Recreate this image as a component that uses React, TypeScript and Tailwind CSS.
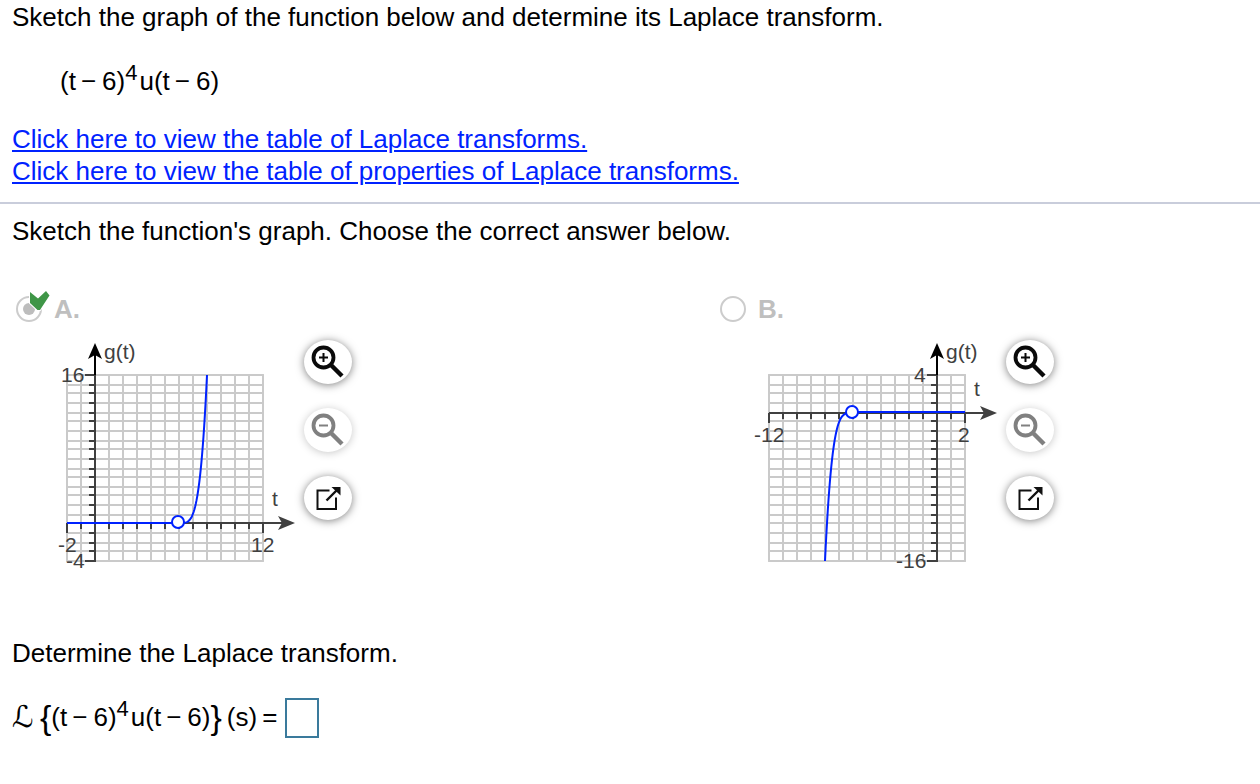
import { useState, type ReactNode } from "react";

const STEP_X = 14;
const ROWS = [0, 10, 18, 28, 38, 46, 56, 66, 74, 84, 94, 102, 112, 120, 130, 140, 148, 158, 168, 176, 186];
const COLS = Array.from({ length: 15 }, (_, i) => i * STEP_X);
const INK = "#404040";
const BLUE = "#0022ff";

type Label = { x: number; y: number; text: string };

type GraphProps = {
  title: string;
  width: number;
  left: number;
  axisCol: number;
  axisRow: number;
  line: [number, number];
  lineShift: number;
  open: number;
  direction: 1 | -1;
  labels: Label[];
};

function Graph({ title, width, left, axisCol, axisRow, line, lineShift, open, direction, labels }: GraphProps) {
  const top = 35;
  const right = left + 14 * STEP_X;
  const bottom = top + 186;
  const ax = left + axisCol * STEP_X;
  const ay = top + ROWS[axisRow];
  const ox = left + open * STEP_X;
  const curve = Array.from({ length: 41 }, (_, i) => {
    const u = i / 20;
    return `${ox + direction * STEP_X * u},${ay - direction * 9.25 * u ** 4}`;
  }).join(" ");

  return (
    <svg role="img" aria-label={title} width={width} height={240} className="shrink-0">
      <g stroke="#cacaca" strokeWidth={2} strokeLinecap="round">
        {ROWS.map((r) => (
          <line key={r} x1={left} x2={right} y1={top + r} y2={top + r} />
        ))}
        {COLS.map((c) => (
          <line key={c} x1={left + c} x2={left + c} y1={top} y2={bottom} />
        ))}
      </g>
      <g stroke={INK} strokeWidth={2}>
        <line x1={ax} x2={ax} y1={top} y2={bottom + 1} />
        <line x1={left} x2={right + 20} y1={ay} y2={ay} />
        {ROWS.map((r, i) => (
          <line key={r} x1={ax - (i === 0 || i === 20 ? 10 : 6)} x2={ax} y1={top + r} y2={top + r} />
        ))}
        {COLS.map((c, i) => (
          <line key={c} x1={left + c} x2={left + c} y1={ay} y2={ay + (i === 0 || i === 14 ? 10 : 6)} />
        ))}
      </g>
      <line x1={ax} x2={ax} y1={top} y2={12} stroke="#000" strokeWidth={2} />
      <path d={`M${ax} 3 L${ax + 7} 19 L${ax} 15 L${ax - 7} 19 Z`} fill="#000" />
      <path d={`M${right + 32} ${ay} l-17 7 l4 -7 l-4 -7 Z`} fill={INK} />
      <line
        x1={left + line[0] * STEP_X}
        x2={left + line[1] * STEP_X}
        y1={ay + lineShift}
        y2={ay + lineShift}
        stroke={BLUE}
        strokeWidth={2}
      />
      <polyline points={curve} fill="none" stroke={BLUE} strokeWidth={2} />
      <circle cx={ox - 1} cy={ay - 1} r={6} fill="#fff" stroke={BLUE} strokeWidth={2} />
      <g fill={INK} fontSize={21} fontFamily="'Liberation Sans', Arial, sans-serif">
        {labels.map((l) => (
          <text key={l.text} x={l.x} y={l.y}>
            {l.text}
          </text>
        ))}
      </g>
    </svg>
  );
}

function Magnifier({ minus = false }: { minus?: boolean }) {
  const color = minus ? "#808080" : "#0a0a0a";
  return (
    <svg width="48" height="44" fill="none" stroke={color}>
      <circle cx="19.5" cy="17.5" r="10" strokeWidth="3.8" />
      <path d="M27.5 25.5 L38 36" strokeWidth="4.4" />
      <path d={minus ? "M15 17.500h9" : "M15 17.500h9M19.500 13v9"} strokeWidth="2" />
    </svg>
  );
}

function PopOut() {
  return (
    <svg width="48" height="44" fill="none" stroke="#111" strokeWidth="2">
      <path d="M25.5 14.5H13.5V33H32V21.5" />
      <path d="M22.5 24.5L33 14" strokeWidth="2.4" />
      <path d="M27.5 11H36.5V19.5Z" fill="#111" stroke="none" />
    </svg>
  );
}

function RoundButton({ label, disabled, children }: { label: string; disabled?: boolean; children: ReactNode }) {
  return (
    <button
      type="button"
      aria-label={label}
      disabled={disabled}
      className="h-11 w-12 rounded-[50%] bg-white shadow-[0_1px_9px_rgba(0,0,0,0.5)] disabled:shadow-[0_1px_9px_rgba(0,0,0,0.22)]"
    >
      {children}
    </button>
  );
}

function Choice({
  letter,
  checked,
  onSelect,
  graph,
}: {
  letter: string;
  checked: boolean;
  onSelect: () => void;
  graph: GraphProps;
}) {
  return (
    <div>
      <div className="flex h-8 items-center gap-3 pl-1">
        <span className="relative flex">
          <input
            id={`choice-${letter}`}
            type="radio"
            name="graph"
            checked={checked}
            onChange={onSelect}
            className="size-[26px] appearance-none rounded-full border-2 border-[#cccccc] bg-white checked:bg-[#bdbdbd] checked:bg-clip-content checked:p-[5px]"
          />
          {checked && (
            <svg width="24" height="24" className="absolute -top-1.5 left-3" aria-hidden="true">
              <path
                d="M2 2L10 8.500L18 1L21.500 5.500L12 20H9.500L2 13Z"
                fill="#3f9647"
                stroke="#fff"
                strokeWidth="2"
                paintOrder="stroke"
              />
            </svg>
          )}
        </span>
        <label htmlFor={`choice-${letter}`} className="font-bold text-[#bfbfbf]">
          {letter}.
        </label>
      </div>
      <div className="mt-[15px] flex">
        <Graph {...graph} />
        <div className="flex flex-col gap-6">
          <RoundButton label="Zoom in">
            <Magnifier />
          </RoundButton>
          <RoundButton label="Zoom out" disabled>
            <Magnifier minus />
          </RoundButton>
          <RoundButton label="Open in a new window">
            <PopOut />
          </RoundButton>
        </div>
      </div>
    </div>
  );
}

function Minus() {
  return <span className="mr-1.5 ml-[5px]">−</span>;
}

function Expression() {
  return (
    <span className="whitespace-nowrap">
      (t
      <Minus />
      6)
      <sup className="relative -top-[10px] align-baseline text-[22px] leading-none">4</sup>
      <span className="ml-0.5">u(t</span>
      <Minus />
      6)
    </span>
  );
}

const graphA: GraphProps = {
  title: "Graph A of g(t)",
  width: 292,
  left: 55,
  axisCol: 2,
  axisRow: 16,
  line: [0, 8],
  lineShift: 0,
  open: 8,
  direction: 1,
  labels: [
    { x: 92, y: 19, text: "g(t)" },
    { x: 49, y: 42, text: "16" },
    { x: 260, y: 166, text: "t" },
    { x: 46, y: 212, text: "-2" },
    { x: 54, y: 228, text: "-4" },
    { x: 239, y: 212, text: "12" },
  ],
};

const graphB: GraphProps = {
  title: "Graph B of g(t)",
  width: 290,
  left: 53,
  axisCol: 12,
  axisRow: 4,
  line: [6, 14],
  lineShift: -1,
  open: 6,
  direction: -1,
  labels: [
    { x: 230, y: 19, text: "g(t)" },
    { x: 198, y: 42, text: "4" },
    { x: 258, y: 56, text: "t" },
    { x: 38, y: 102, text: "-12" },
    { x: 242, y: 102, text: "2" },
    { x: 180, y: 228, text: "-16" },
  ],
};

export default function App() {
  const [choice, setChoice] = useState("A");
  const [answer, setAnswer] = useState("");

  return (
    <main className="min-h-screen bg-white pt-px font-['Liberation_Sans',Arial,sans-serif] text-[26px] leading-8 text-black">
      <section className="border-b-2 border-[#c9cddb] px-3 pb-[15px]">
        <p>Sketch the graph of the function below and determine its Laplace transform.</p>
        <p className="mt-8 pl-12">
          <Expression />
        </p>
        <ul className="mt-[26px] text-[#0022ff] underline">
          <li>
            <a href="#transforms">Click here to view the table of Laplace transforms.</a>
          </li>
          <li>
            <a href="#properties">Click here to view the table of properties of Laplace transforms.</a>
          </li>
        </ul>
      </section>

      <section className="pt-[11px] pl-3">
        <p>Sketch the function's graph. Choose the correct answer below.</p>
        <div className="mt-[46px] grid grid-cols-[22fr_17fr]">
          <Choice letter="A" checked={choice === "A"} onSelect={() => setChoice("A")} graph={graphA} />
          <Choice letter="B" checked={choice === "B"} onSelect={() => setChoice("B")} graph={graphB} />
        </div>
      </section>

      <section className="px-3 pt-[57px]">
        <p>Determine the Laplace transform.</p>
        <div className="mt-[29px] flex items-center">
          <label htmlFor="answer" className="flex items-center pb-0.5 whitespace-nowrap">
            <span className="w-7 font-['DejaVu_Sans',sans-serif] text-[30px] leading-8">ℒ</span>
            <span className="text-[34px] leading-8">{"{"}</span>
            <Expression />
            <span className="text-[34px] leading-8">{"}"}</span>
            <span className="ml-[5px]">(s)</span>
            <span className="ml-[5px]">=</span>
          </label>
          <input
            id="answer"
            type="text"
            value={answer}
            onChange={(e) => setAnswer(e.target.value)}
            className="ml-2 h-10 w-[34px] border-2 border-[#3a7a9c] bg-white px-1 outline-none"
          />
        </div>
      </section>
    </main>
  );
}
